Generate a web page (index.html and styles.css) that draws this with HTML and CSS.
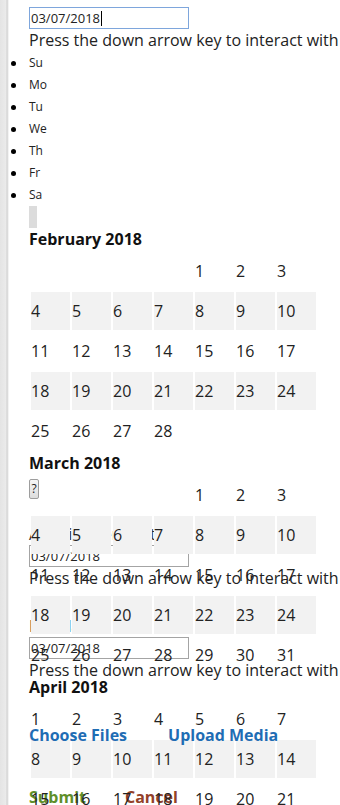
FILE: index.html
```html
<!DOCTYPE html>
<html lang="en">
<head>
<meta charset="utf-8">
<title>Date picker</title>
<link rel="stylesheet" href="styles.css">
</head>
<body>
<div class="page">
  <div class="field">
    <div class="date-input is-focused"><span>03/07/2018</span><span class="caret"></span></div>
    <p class="help">Press the down arrow key to interact with the calendar and select a date.</p>
  </div>
  <ul class="weekdays">
    <li>Su</li>
    <li>Mo</li>
    <li>Tu</li>
    <li>We</li>
    <li>Th</li>
    <li>Fr</li>
    <li>Sa</li>
  </ul>
  <div class="calendar">
    <span class="nav-prev"></span>
    <section class="month">
      <h2 class="month-title">February 2018</h2>
      <table class="month-grid">
        <tr><td></td><td></td><td></td><td></td><td>1</td><td>2</td><td>3</td></tr>
        <tr><td>4</td><td>5</td><td>6</td><td>7</td><td>8</td><td>9</td><td>10</td></tr>
        <tr><td>11</td><td>12</td><td>13</td><td>14</td><td>15</td><td>16</td><td>17</td></tr>
        <tr><td>18</td><td>19</td><td>20</td><td>21</td><td>22</td><td>23</td><td>24</td></tr>
        <tr><td>25</td><td>26</td><td>27</td><td>28</td><td></td><td></td><td></td></tr>
      </table>
    </section>
    <section class="month">
      <h2 class="month-title">March 2018</h2>
      <button class="help-btn" type="button">?</button>
      <table class="month-grid">
        <tr><td></td><td></td><td></td><td></td><td>1</td><td>2</td><td>3</td></tr>
        <tr><td>4</td><td>5</td><td>6</td><td>7</td><td>8</td><td>9</td><td>10</td></tr>
        <tr><td>11</td><td>12</td><td>13</td><td>14</td><td>15</td><td>16</td><td>17</td></tr>
        <tr><td>18</td><td>19</td><td>20</td><td>21</td><td>22</td><td>23</td><td>24</td></tr>
        <tr><td>25</td><td>26</td><td>27</td><td>28</td><td>29</td><td>30</td><td>31</td></tr>
      </table>
    </section>
    <section class="month">
      <h2 class="month-title">April 2018</h2>
      <table class="month-grid">
        <tr><td>1</td><td>2</td><td>3</td><td>4</td><td>5</td><td>6</td><td>7</td></tr>
        <tr><td>8</td><td>9</td><td>10</td><td>11</td><td>12</td><td>13</td><td>14</td></tr>
        <tr><td>15</td><td>16</td><td>17</td><td>18</td><td>19</td><td>20</td><td>21</td></tr>
        <tr><td>22</td><td>23</td><td>24</td><td>25</td><td>26</td><td>27</td><td>28</td></tr>
        <tr><td>29</td><td>30</td><td></td><td></td><td></td><td></td><td></td></tr>
      </table>
    </section>
  </div>
  <div class="field">
    <label class="field-label" for="d2">Appointment date</label>
    <input class="date-input" id="d2" type="text" value="03/07/2018">
    <p class="help">Press the down arrow key to interact with the calendar and select a date.</p>
  </div>
  <div class="field field-spaced">
    <label class="field-label" for="d3">End date</label>
    <input class="date-input" id="d3" type="text" value="03/07/2018">
    <p class="help">Press the down arrow key to interact with the calendar and select a date.</p>
  </div>
  <div class="actions media-actions">
    <button class="link-btn link-blue" type="button">Choose Files</button>
    <button class="link-btn link-blue" type="button">Upload Media</button>
  </div>
  <div class="actions form-actions">
    <button class="link-btn link-green" type="button">Submit</button>
    <button class="link-btn link-brown" type="button">Cancel</button>
  </div>
</div>
</body>
</html>
```

FILE: styles.css
```css
* {
  box-sizing: border-box;
}

html {
  background: #ffffff linear-gradient(to right, #e4e4e4 0, #ebebeb 6px, #cfcfcf 7px, #ffffff 9px) repeat-y;
  background-size: 9px 100%;
}

body {
  margin: 0;
  font-family: "Open Sans", "Liberation Sans", sans-serif;
  color: #222;
  overflow-x: hidden;
}

.page {
  padding: 7px 0 0 29px;
}

.field {
  display: block;
}

.field-spaced {
  margin-top: 25px;
}

.field-label {
  display: block;
  font-size: 16px;
  line-height: 22px;
  color: #333;
}

.date-input {
  display: block;
  width: 160px;
  height: 22px;
  margin: 0;
  padding: 0 1px;
  border: 1px solid #a4a4a4;
  background: transparent;
  font-family: "Open Sans", "Liberation Sans", sans-serif;
  font-size: 13px;
  color: #222;
  outline: none;
}

.date-input.is-focused {
  display: flex;
  align-items: center;
  border-color: #7ea6dc;
}

.caret {
  width: 1px;
  height: 15px;
  margin-left: 1px;
  background: #000;
}

.help {
  margin: 0;
  font-size: 16px;
  line-height: 23px;
  white-space: nowrap;
  color: #222;
}

.weekdays {
  list-style: none;
  margin: 0;
  padding: 0;
  font-size: 12px;
  line-height: 22px;
  color: #222;
}

.weekdays li::before {
  content: "";
  display: inline-block;
  width: 5px;
  height: 5px;
  margin-left: -18px;
  margin-right: 13px;
  border-radius: 50%;
  background: #000;
  vertical-align: middle;
}

.calendar {
  position: relative;
  z-index: 1;
  height: 317px;
}

.nav-prev {
  display: block;
  width: 8px;
  height: 22px;
  background: #dcdcdc;
}

.month {
  position: relative;
}

.month-title {
  margin: 0;
  font-size: 16px;
  line-height: 22px;
  font-weight: 700;
  color: #111;
}

.month-grid {
  border-collapse: separate;
  border-spacing: 2px;
}

.month-grid td {
  width: 39px;
  height: 38px;
  padding: 0;
  font-size: 16px;
  line-height: 20px;
  text-align: left;
  vertical-align: middle;
  color: #222;
}

.month-grid tr:nth-child(even) td {
  background: #f2f2f2;
}

.help-btn {
  position: absolute;
  left: 0;
  top: 27px;
  width: 10px;
  height: 20px;
  padding: 0;
  border: 1px solid #9d9d9d;
  border-radius: 2px;
  background: linear-gradient(#f6f6f6, #dddddd);
  font-family: "Open Sans", "Liberation Sans", sans-serif;
  font-size: 12px;
  line-height: 16px;
  color: #222;
}

.actions {
  display: flex;
  gap: 41px;
}

.media-actions {
  position: relative;
  z-index: 2;
  margin-top: 42px;
}

.form-actions {
  margin-top: 40px;
  gap: 39px;
}

.link-btn {
  margin: 0;
  padding: 0;
  border: 0;
  background: none;
  font-family: "Open Sans", "Liberation Sans", sans-serif;
  font-size: 16px;
  font-weight: 700;
  line-height: 22px;
}

.link-blue {
  color: #1f6db4;
}

.link-green {
  color: #5f8f2a;
}

.link-brown {
  color: #934128;
}
```
